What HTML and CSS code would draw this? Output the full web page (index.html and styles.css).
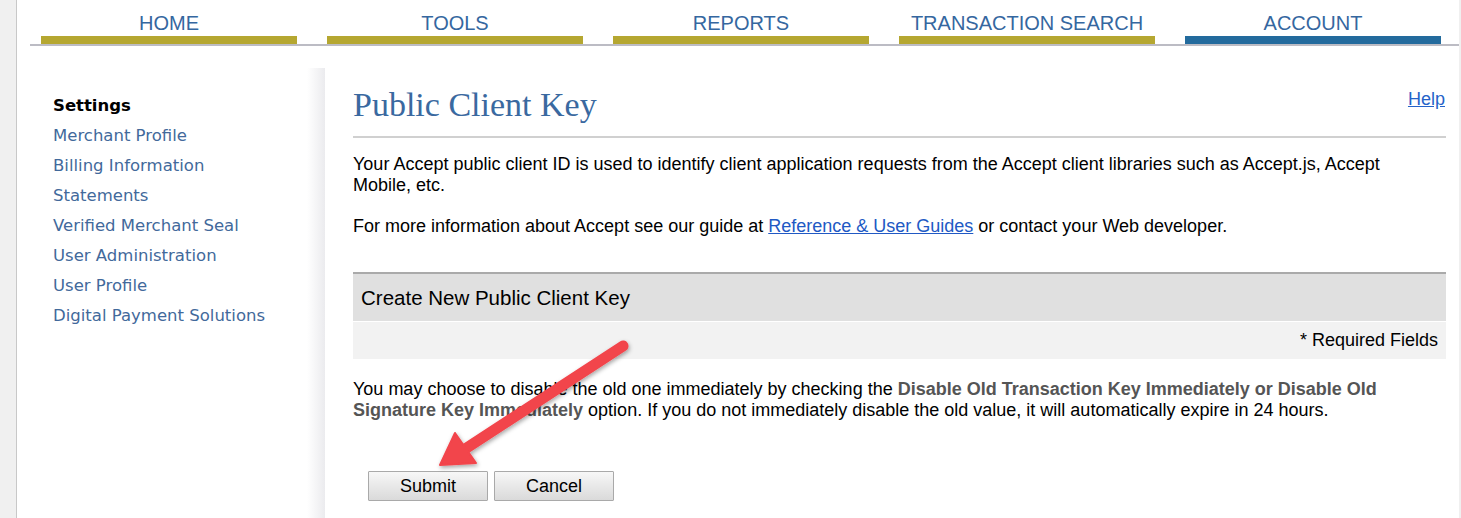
FILE: index.html
```html
<!DOCTYPE html>
<html lang="en">
<head>
    <meta charset="UTF-8">
    <title>Public Client Key</title>
    <link rel="stylesheet" href="styles.css">
</head>
<body>
<div class="page">
    <div class="nav">
        <a class="nav-tab" href="#">HOME</a>
        <a class="nav-tab" href="#">TOOLS</a>
        <a class="nav-tab" href="#">REPORTS</a>
        <a class="nav-tab" href="#">TRANSACTION SEARCH</a>
        <a class="nav-tab active" href="#">ACCOUNT</a>
    </div>

    <div class="main">
        <div class="sidebar">
            <div class="side-title">Settings</div>
            <a class="side-link" href="#">Merchant Profile</a>
            <a class="side-link" href="#">Billing Information</a>
            <a class="side-link" href="#">Statements</a>
            <a class="side-link" href="#">Verified Merchant Seal</a>
            <a class="side-link" href="#">User Administration</a>
            <a class="side-link" href="#">User Profile</a>
            <a class="side-link" href="#">Digital Payment Solutions</a>
        </div>

        <div class="content">
            <div class="title-row">
                <h1>Public Client Key</h1>
                <a class="help" href="#">Help</a>
            </div>

            <p class="first">Your Accept public client ID is used to identify client application requests from the Accept client libraries such as Accept.js, Accept Mobile, etc.</p>
            <p>For more information about Accept see our guide at <a href="#">Reference &amp; User Guides</a> or contact your Web developer.</p>

            <div class="key-box">
                <div class="key-header">Create New Public Client Key</div>
                <div class="key-required">* Required Fields</div>
            </div>

            <p class="note">You may choose to disable the old one immediately by checking the <b>Disable Old Transaction Key Immediately or Disable Old Signature Key Immediately</b> option. If you do not immediately disable the old value, it will automatically expire in 24 hours.</p>

            <div class="buttons">
                <button class="btn">Submit</button>
                <button class="btn">Cancel</button>
            </div>
        </div>
    </div>
</div>

<!-- annotation arrow over the page -->
<svg class="arrow" width="1461" height="518" viewBox="0 0 1461 518">
    <defs>
        <filter id="shade" x="-20%" y="-20%" width="140%" height="140%">
            <feDropShadow dx="1" dy="2" stdDeviation="2" flood-color="#000" flood-opacity="0.35"/>
        </filter>
    </defs>
    <g filter="url(#shade)" fill="#f2444b" stroke="#f2444b">
        <line x1="623" y1="346" x2="462" y2="451" stroke-width="11" stroke-linecap="round"/>
        <polygon points="440,465 455,433 476,463" stroke-width="2" stroke-linejoin="round"/>
    </g>
</svg>
</body>
</html>
```

FILE: styles.css
```css
/* Основа */
body {
    margin: 0;
    background-color: #f0f0f0;
    font-family: "Liberation Sans", Arial, sans-serif;
    height: 518px;
    overflow: hidden;
    position: relative;
}

.page {
    margin: 0 2px 0 16px;
    height: 518px;
    background-color: #fff;
    border-left: 1px solid #c8c8c8;
    display: flex;
    flex-direction: column;
}

/* Верхнее меню */
.nav {
    display: flex;
    gap: 30px;
    margin-left: 13px;
    padding: 10px 0 0 11px;
    border-bottom: 2px solid #bcbcc4;
}

.nav-tab {
    width: 256px;
    text-align: center;
    font-size: 20px;
    line-height: 26px;
    color: #35679f;
    text-decoration: none;
    border-bottom: 8px solid #b5a731;
}

.nav-tab.active {
    border-bottom-color: #236b9d;
}

/* Боковое меню */
.main {
    flex: 1;
    display: flex;
}

.sidebar {
    width: 272px;
    margin-top: 22px;
    padding: 23px 0 0 36px;
    background: linear-gradient(to right, #fff 290px, #ebebee 308px);
    font-family: "DejaVu Sans", Verdana, sans-serif;
    font-size: 16.5px;
}

.side-title {
    font-weight: bold;
    color: #000;
    line-height: 30px;
}

.side-link {
    display: block;
    line-height: 30px;
    color: #42699b;
    text-decoration: none;
}

/* Содержимое */
.content {
    flex: 1;
    margin: 0 13px 0 28px;
    padding-top: 39px;
    font-size: 18px;
    color: #000;
}

.title-row {
    display: flex;
    justify-content: space-between;
    align-items: flex-start;
    padding-bottom: 11px;
    border-bottom: 2px solid #d0d0d0;
}

h1 {
    margin: 0;
    font-family: "Liberation Serif", Georgia, serif;
    font-weight: normal;
    font-size: 34px;
    line-height: 40px;
    color: #3a69a0;
}

.help {
    line-height: 28px;
    margin-right: 1px;
    color: #2563c9;
}

p {
    margin: 20px 0 0;
    line-height: 21px;
}

p.first {
    margin-top: 16px;
    padding-right: 8px;
}

p a {
    color: #2159c4;
}

.key-box {
    margin-top: 35px;
    border-top: 2px solid #aaa;
}

.key-header {
    height: 47px;
    line-height: 47px;
    padding-left: 8px;
    font-size: 20.5px;
    background-color: #e0e0e0;
}

.key-required {
    margin-top: 1px;
    height: 37px;
    line-height: 37px;
    padding-right: 8px;
    text-align: right;
    background-color: #f2f2f2;
}

p.note {
    margin-top: 20px;
}

p.note b {
    color: #555;
}

.buttons {
    display: flex;
    gap: 6px;
    margin: 50px 0 0 15px;
}

.btn {
    width: 120px;
    height: 30px;
    font-family: "Liberation Sans", Arial, sans-serif;
    font-size: 18px;
    color: #000;
    background: linear-gradient(#f7f7f7, #dadada);
    border: 1px solid #a9a9a9;
    border-radius: 1px;
}

.arrow {
    position: absolute;
    top: 0;
    left: 0;
    pointer-events: none;
}
```
